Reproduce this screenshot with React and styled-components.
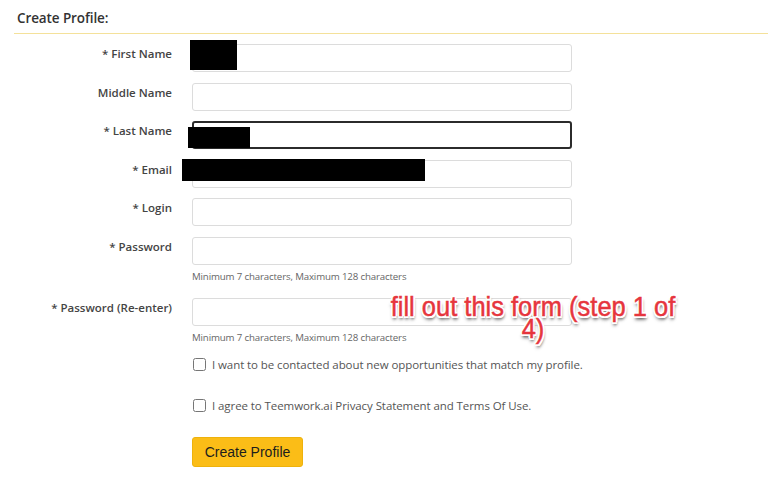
import React from "react";
import styled, { createGlobalStyle } from "styled-components";

const GlobalStyle = createGlobalStyle`
  html, body {
    margin: 0;
    padding: 0;
    background: #fff;
  }
  body {
    font-family: "Open Sans", "Noto Sans", sans-serif;
    color: #333;
  }
`;

const Page = styled.div`
  position: relative;
  width: 768px;
  height: 493px;
  padding-left: 14px;
  box-sizing: border-box;
  overflow: hidden;
`;

const Header = styled.div`
  height: 34px;
  border-bottom: 1px solid #f4e19a;
  box-sizing: border-box;
  display: flex;
  align-items: center;
  padding: 3px 0 0 3px;
`;

const Title = styled.h2`
  margin: 0;
  font-size: 13.5px;
  font-weight: 600;
  color: #333;
  letter-spacing: -0.1px;
`;

const FormGrid = styled.div`
  display: grid;
  grid-template-columns: 158px 380px;
  column-gap: 20px;
  row-gap: 10.6px;
  margin-top: 10px;
`;

const Label = styled.label`
  text-align: right;
  font-size: 11.5px;
  font-weight: 600;
  color: #444;
  padding-top: 2px;
  line-height: 16px;
`;

const Field = styled.div`
  position: relative;
`;

const Input = styled.input`
  display: block;
  width: 100%;
  height: 28px;
  box-sizing: border-box;
  border: ${(p) => (p.$focused ? "2px solid #2b2b2b" : "1px solid #dcdcdc")};
  border-radius: 3px;
  background: #fff;
  outline: none;
  padding: 0 8px;
  font: inherit;
`;

const Hint = styled.div`
  font-size: 9.7px;
  color: #666;
  line-height: 14px;
  padding-top: 5px;
  padding-bottom: 3px;
  letter-spacing: -0.15px;
`;

const Redact = styled.div`
  position: absolute;
  background: #000;
  left: ${(p) => p.$x}px;
  top: ${(p) => p.$y}px;
  width: ${(p) => p.$w}px;
  height: ${(p) => p.$h}px;
`;

const Options = styled.div`
  display: flex;
  flex-direction: column;
  align-items: flex-start;
  gap: 21px;
  margin-top: 7px;
  padding-left: 178px;
`;

const CheckRow = styled.label`
  display: flex;
  align-items: center;
  gap: 6px;
  height: 20px;
  font-size: 11.5px;
  color: #555;
  letter-spacing: -0.08px;

  input {
    margin: 0 0 0 1px;
    width: 13px;
    height: 13px;
  }
`;

const Button = styled.button`
  width: 111px;
  height: 30px;
  border: 1px solid #eeb20c;
  border-radius: 3px;
  background: #fbbd17;
  font-family: "Liberation Sans", Arial, sans-serif;
  font-size: 14px;
  color: #1d1d1d;
  padding: 0;
  cursor: pointer;
`;

const Annotation = styled.div`
  position: absolute;
  left: 373px;
  top: 296px;
  width: 320px;
  text-align: center;
  font-family: "Liberation Sans", Arial, sans-serif;
  font-size: 28px;
  line-height: 22px;
  color: #e6353d;
  -webkit-text-stroke: 0.5px #e6353d;
  transform: scaleX(0.91);
  text-shadow: 2px 0 0 #fff, -2px 0 0 #fff, 0 2px 0 #fff, 0 -2px 0 #fff,
    1.5px 1.5px 0 #fff, -1.5px -1.5px 0 #fff, 1.5px -1.5px 0 #fff,
    -1.5px 1.5px 0 #fff, 1px 3px 3px rgba(0, 0, 0, 0.6),
    0 4px 4px rgba(0, 0, 0, 0.35);
  pointer-events: none;
`;

const fields = [
  { label: "* First Name", redact: { x: -2, y: -4, w: 47, h: 30 } },
  { label: "Middle Name" },
  { label: "* Last Name", focused: true, redact: { x: -4, y: 6, w: 62, h: 21 } },
  { label: "* Email", redact: { x: -10, y: -1, w: 243, h: 22 } },
  { label: "* Login" },
  { label: "* Password", type: "password", hint: true },
  { label: "* Password (Re-enter)", type: "password", hint: true },
];

export default function App() {
  return (
    <>
      <GlobalStyle />
      <Page>
        <Header>
          <Title>Create Profile:</Title>
        </Header>
        <FormGrid>
          {fields.map((f) => (
            <React.Fragment key={f.label}>
              <Label>{f.label}</Label>
              <Field>
                <Input type={f.type || "text"} $focused={f.focused} readOnly />
                {f.redact && (
                  <Redact $x={f.redact.x} $y={f.redact.y} $w={f.redact.w} $h={f.redact.h} />
                )}
                {f.hint && <Hint>Minimum 7 characters, Maximum 128 characters</Hint>}
              </Field>
            </React.Fragment>
          ))}
        </FormGrid>
        <Options>
          <CheckRow>
            <input type="checkbox" />
            I want to be contacted about new opportunities that match my profile.
          </CheckRow>
          <CheckRow>
            <input type="checkbox" />
            I agree to Teemwork.ai Privacy Statement and Terms Of Use.
          </CheckRow>
          <Button>Create Profile</Button>
        </Options>
        <Annotation>
          fill out this form (step 1 of
          <br />
          4)
        </Annotation>
      </Page>
    </>
  );
}
